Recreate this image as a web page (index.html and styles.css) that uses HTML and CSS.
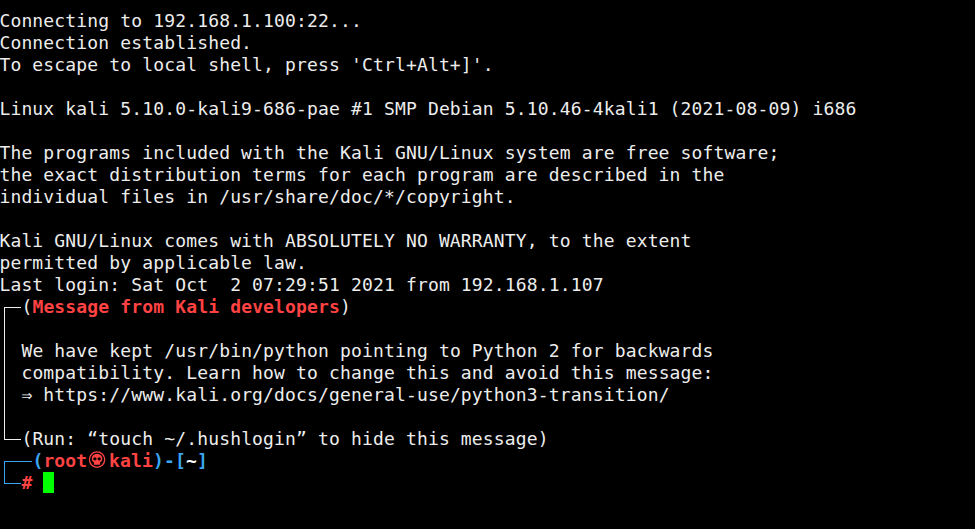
FILE: index.html
```html
<!DOCTYPE html>
<html lang="en">
<head>
<meta charset="utf-8">
<title>Terminal</title>
<link rel="stylesheet" href="styles.css">
</head>
<body>
<pre class="terminal">Connecting to 192.168.1.100:22...
Connection established.
To escape to local shell, press 'Ctrl+Alt+]'.

Linux kali 5.10.0-kali9-686-pae #1 SMP Debian 5.10.46-4kali1 (2021-08-09) i686

The programs included with the Kali GNU/Linux system are free software;
the exact distribution terms for each program are described in the
individual files in /usr/share/doc/*/copyright.

Kali GNU/Linux comes with ABSOLUTELY NO WARRANTY, to the extent
permitted by applicable law.
Last login: Sat Oct  2 07:29:51 2021 from 192.168.1.107
<span class="box box-top">┌─</span>(<b class="red">Message from Kali developers</b>)
<span class="box box-side">│</span>
<span class="box box-side">│</span> We have kept /usr/bin/python pointing to Python 2 for backwards
<span class="box box-side">│</span> compatibility. Learn how to change this and avoid this message:
<span class="box box-side">│</span> ⇒ https://www.kali.org/docs/general-use/python3-transition/
<span class="box box-side">│</span>
<span class="box box-end">└─</span>(Run: “touch ~/.hushlogin” to hide this message)
<span class="box box-top box-blue box-long">┌──</span><span class="blue">(</span><b class="red">root<svg class="skull" viewBox="0 0 22 22" aria-hidden="true"><circle cx="10.200" cy="9.600" r="7.800" fill="none" stroke="currentColor" stroke-width="1.300"/><path fill="currentColor" fill-rule="evenodd" d="M10.200 3.800c-3.100 0-5.400 2-5.400 4.800 0 1.600.8 2.900 2.300 3.700v2.400h6.200v-2.400c1.500-.8 2.300-2.100 2.300-3.700 0-2.800-2.300-4.800-5.400-4.800zM8 7.100a1.700 1.700 0 1 1 0 3.400 1.700 1.700 0 0 1 0-3.400zm4.400 0a1.700 1.700 0 1 1 0 3.400 1.700 1.700 0 0 1 0-3.400z"/></svg>kali</b><span class="blue">)-[</span><b class="white">~</b><span class="blue">]</span>
<span class="box box-end box-blue">└─</span><b class="red">#</b> <span class="cursor"> </span></pre>
</body>
</html>
```

FILE: styles.css
```css
html, body {
  margin: 0;
  padding: 0;
  height: 100%;
  background: #000;
  overflow: hidden;
}

.terminal {
  margin: 0 0 0 -0.6px;
  padding: 10px 0 0;
  font-family: "DejaVu Sans Mono", monospace;
  font-size: 18px;
  line-height: 22px;
  letter-spacing: 0.15px;
  color: #ededed;
  background: #000;
}

/* Box-drawing characters stay in the text; thin rules are drawn over them so
   that they join up across the 22px rows, as they do in the terminal. */
.box {
  --line: #ededed;
  position: relative;
  display: inline-block;
  height: 22px;
  vertical-align: top;
  color: transparent;
}

.box-blue {
  --line: #3ba5f0;
}

.box::before {
  content: "";
  position: absolute;
  left: 4.6px;
  box-sizing: border-box;
  border-left: 1px solid var(--line);
}

.box-top::before {
  top: 11px;
  bottom: 0;
  width: 17px;
  border-top: 1px solid var(--line);
}

.box-long::before {
  width: 28px;
}

.box-side::before {
  top: 0;
  bottom: 0;
}

.box-end::before {
  top: 0;
  height: 12px;
  width: 17px;
  border-bottom: 1px solid var(--line);
}

.red {
  color: #ff4343;
  font-weight: 700;
}

.blue {
  color: #3ba5f0;
  font-weight: 700;
}

.white {
  color: #fff;
  font-weight: 700;
}

.skull {
  display: inline-block;
  width: 21.68px;
  height: 22px;
  vertical-align: -5px;
}

.cursor {
  background: #00ff00;
}
```
